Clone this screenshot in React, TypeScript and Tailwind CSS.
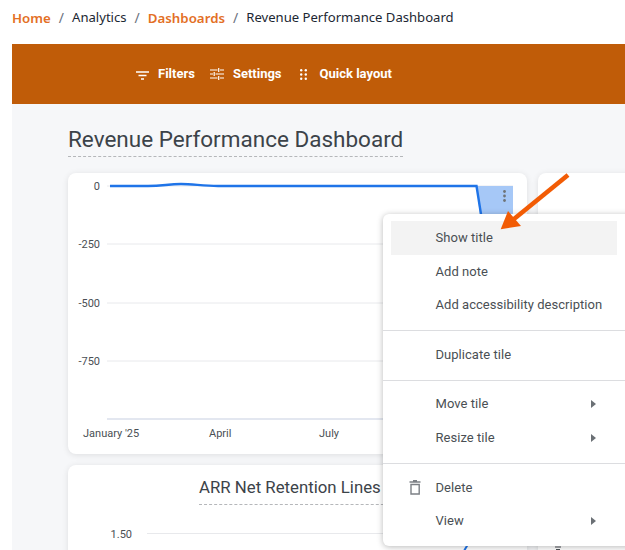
import React from "react";

const roboto = "font-['Roboto',sans-serif]";

function Caret() {
  return (
    <svg width="5" height="8" viewBox="0 0 5 8" className="shrink-0">
      <path d="M0 0 L5 4 L0 8 Z" fill="#6b7075" />
    </svg>
  );
}

function Item({ label, active, caret, icon }: { label: string; active?: boolean; caret?: boolean; icon?: React.ReactNode }) {
  return (
    <div className={`h-[33.6px] flex items-center ${active ? "bg-[#f3f3f3]" : ""} ml-2 mr-2 pr-[21px] w-[226px]`}>
      <div className="w-[44.5px] shrink-0 flex justify-center pl-[4px]">{icon}</div>
      <span className="flex-1 text-[13px] tracking-[0.04px] text-[#4a4f54] whitespace-nowrap">{label}</span>
      {caret && <Caret />}
    </div>
  );
}

function Sep() {
  return <div className="mt-[8.300px] mb-[6.700px] border-t border-[#dcdde0]" />;
}

function Chart() {
  return (
    <svg width="459" height="281" viewBox="0 0 459 281" className="block">
      <g stroke="#e8e9ec" strokeWidth="1">
        <line x1="39" y1="13" x2="445" y2="13" />
        <line x1="39" y1="71" x2="445" y2="71" />
        <line x1="39" y1="130" x2="445" y2="130" />
        <line x1="39" y1="188" x2="445" y2="188" />
      </g>
      <line x1="39" y1="246" x2="445" y2="246" stroke="#e3e7f0" strokeWidth="2" />
      <path d="M408.500 13 L445 13 L445 60 L414 60 Z" fill="#a6c8f7" />
      <path d="M42 13 L80 13 C95 13 100 11 113 11 C125 11 135 13 150 13 L408.500 13 L416 60" fill="none" stroke="#1f74e8" strokeWidth="2.400" />
      <g fill="#6f7377">
        <circle cx="436.500" cy="18.500" r="1.400" />
        <circle cx="436.500" cy="23" r="1.400" />
        <circle cx="436.500" cy="27.500" r="1.400" />
      </g>
    </svg>
  );
}

export default function App() {
  return (
    <div className={`relative w-[625px] h-[550px] overflow-hidden bg-white ${roboto}`}>
      <nav className="h-[44px] pl-3 pb-[9px] flex items-center text-[13.100px] font-['Noto_Sans',sans-serif] text-[#1c2733] whitespace-nowrap">
        <span className="font-semibold text-[13.300px] text-[#e36f25] translate-y-[1px]">Home</span>
        <span className="mx-[8px] text-[#6b7280] text-[14px]">/</span>
        <span>Analytics</span>
        <span className="ml-[8px] mr-[8px] text-[#6b7280] text-[14px]">/</span>
        <span className="font-semibold text-[13.300px] text-[#e36f25] translate-y-[1px]">Dashboards</span>
        <span className="mx-[8px] text-[#6b7280] text-[14px]">/</span>
        <span>Revenue Performance Dashboard</span>
      </nav>
      <div className="ml-3 h-[506px] flex flex-col overflow-hidden bg-[#f6f7f9]">
        <div className="h-[60px] shrink-0 bg-[#c05c08] pl-[124px] flex items-center text-white text-[13px] font-bold">
          <svg width="13" height="9" viewBox="0 0 13 9" className="mr-[9px] translate-y-[1px]"><path d="M0 1h13M2.500 4.500h8M5 8h3" stroke="#fff" strokeWidth="1.300" fill="none" /></svg>
          <span>Filters</span>
          <svg width="14" height="12" viewBox="0 0 14 12" className="ml-[15px] mr-[9px]"><path d="M0 2h7.500M10 2h4M0 6h3M5.500 6h8.500M0 10h7.500M10 10h4M8.700 0v4M4.200 4v4M8.700 8v4" stroke="#fff" strokeWidth="1.200" fill="none" /></svg>
          <span>Settings</span>
          <svg width="7" height="11" viewBox="0 0 7 11" className="ml-[18px] mr-[13px]" fill="#fff"><circle cx="1.200" cy="1.200" r="1.200" /><circle cx="5.800" cy="1.200" r="1.200" /><circle cx="1.200" cy="5.500" r="1.200" /><circle cx="5.800" cy="5.500" r="1.200" /><circle cx="1.200" cy="9.800" r="1.200" /><circle cx="5.800" cy="9.800" r="1.200" /></svg>
          <span>Quick layout</span>
        </div>
        <div className="pl-14 pt-5">
          <h1 className="inline-block h-[33px] w-[335px] border-b border-dashed border-[#b5b7ba] text-[22.500px] leading-[30px] text-[#3c4349] whitespace-nowrap">Revenue Performance Dashboard</h1>
          <div className="mt-[16px] flex gap-[11px]">
            <div className="relative w-[459px] h-[281px] shrink-0 bg-white rounded-lg shadow-[0_1px_6px_rgba(0,0,0,0.1)]">
              <Chart />
              <div className="absolute inset-0 text-[11px] text-[#4a4f54]">
                <span className="absolute right-[427px] top-[6px]">0</span>
                <span className="absolute right-[427px] top-[64px]">-250</span>
                <span className="absolute right-[427px] top-[123px]">-500</span>
                <span className="absolute right-[427px] top-[181px]">-750</span>
                <span className="absolute left-[15px] top-[253px]">January '25</span>
                <span className="absolute left-[141px] top-[253px]">April</span>
                <span className="absolute left-[251px] top-[253px]">July</span>
              </div>
            </div>
            <div className="w-[100px] h-[281px] shrink-0 bg-white rounded-lg shadow-[0_1px_6px_rgba(0,0,0,0.1)]" />
          </div>
          <div className="mt-[11px] flex gap-[11px]">
            <div className="relative w-[459px] h-[120px] shrink-0 bg-white rounded-lg shadow-[0_1px_6px_rgba(0,0,0,0.1)]">
              <div className="ml-[131px] pt-[11px] w-[200px] h-[40px] border-b border-dashed border-[#b5b7ba] text-[16.800px] leading-[22px] text-[#3c4349] whitespace-nowrap">ARR Net Retention Lines</div>
              <span className="absolute right-[395px] top-[62px] text-[11px] text-[#4a4f54]">1.50</span>
              <div className="absolute left-[79px] right-[14px] top-[68px] h-px bg-[#e8e9ec]" />
              <svg width="6" height="6" viewBox="0 0 6 6" className="absolute left-[395px] top-[80px]"><path d="M1 6 L4.500 0" stroke="#1f74e8" strokeWidth="2" fill="none" /></svg>
            </div>
            <div className="relative w-[100px] h-[120px] shrink-0 bg-white rounded-lg shadow-[0_1px_6px_rgba(0,0,0,0.1)]">
              <svg width="6" height="5" viewBox="0 0 6 5" className="absolute left-[17px] top-[81px]"><path d="M0 1h6M1 3.500h4" stroke="#4a4f54" strokeWidth="1" fill="none" /></svg>
            </div>
          </div>
        </div>
      </div>

      <div className="absolute left-[383px] top-[214px] w-[260px] h-[332px] bg-white rounded-md shadow-[0_1px_6px_rgba(0,0,0,0.28)] pt-[7px]">
        <Item label="Show title" active />
        <Item label="Add note" />
        <Item label="Add accessibility description" />
        <Sep />
        <Item label="Duplicate tile" />
        <Sep />
        <Item label="Move tile" caret />
        <Item label="Resize tile" caret />
        <Sep />
        <Item
          label="Delete"
          icon={
            <svg width="12" height="15" viewBox="0 0 12 15" fill="none" stroke="#7c8085" strokeWidth="1.400">
              <path d="M2 4.500h8.200V14H2z" />
              <path d="M0.500 2h11M4 0.700h4" />
            </svg>
          }
        />
        <Item label="View" caret />
      </div>

      <svg width="80" height="70" viewBox="0 0 80 70" className="absolute left-[497px] top-[170px] pointer-events-none">
        <path d="M71 5 L17 49" stroke="#f25c05" strokeWidth="4.500" fill="none" />
        <path d="M3.700 59.300 L11 41 L24 56 Z" fill="#f25c05" />
      </svg>
    </div>
  );
}
